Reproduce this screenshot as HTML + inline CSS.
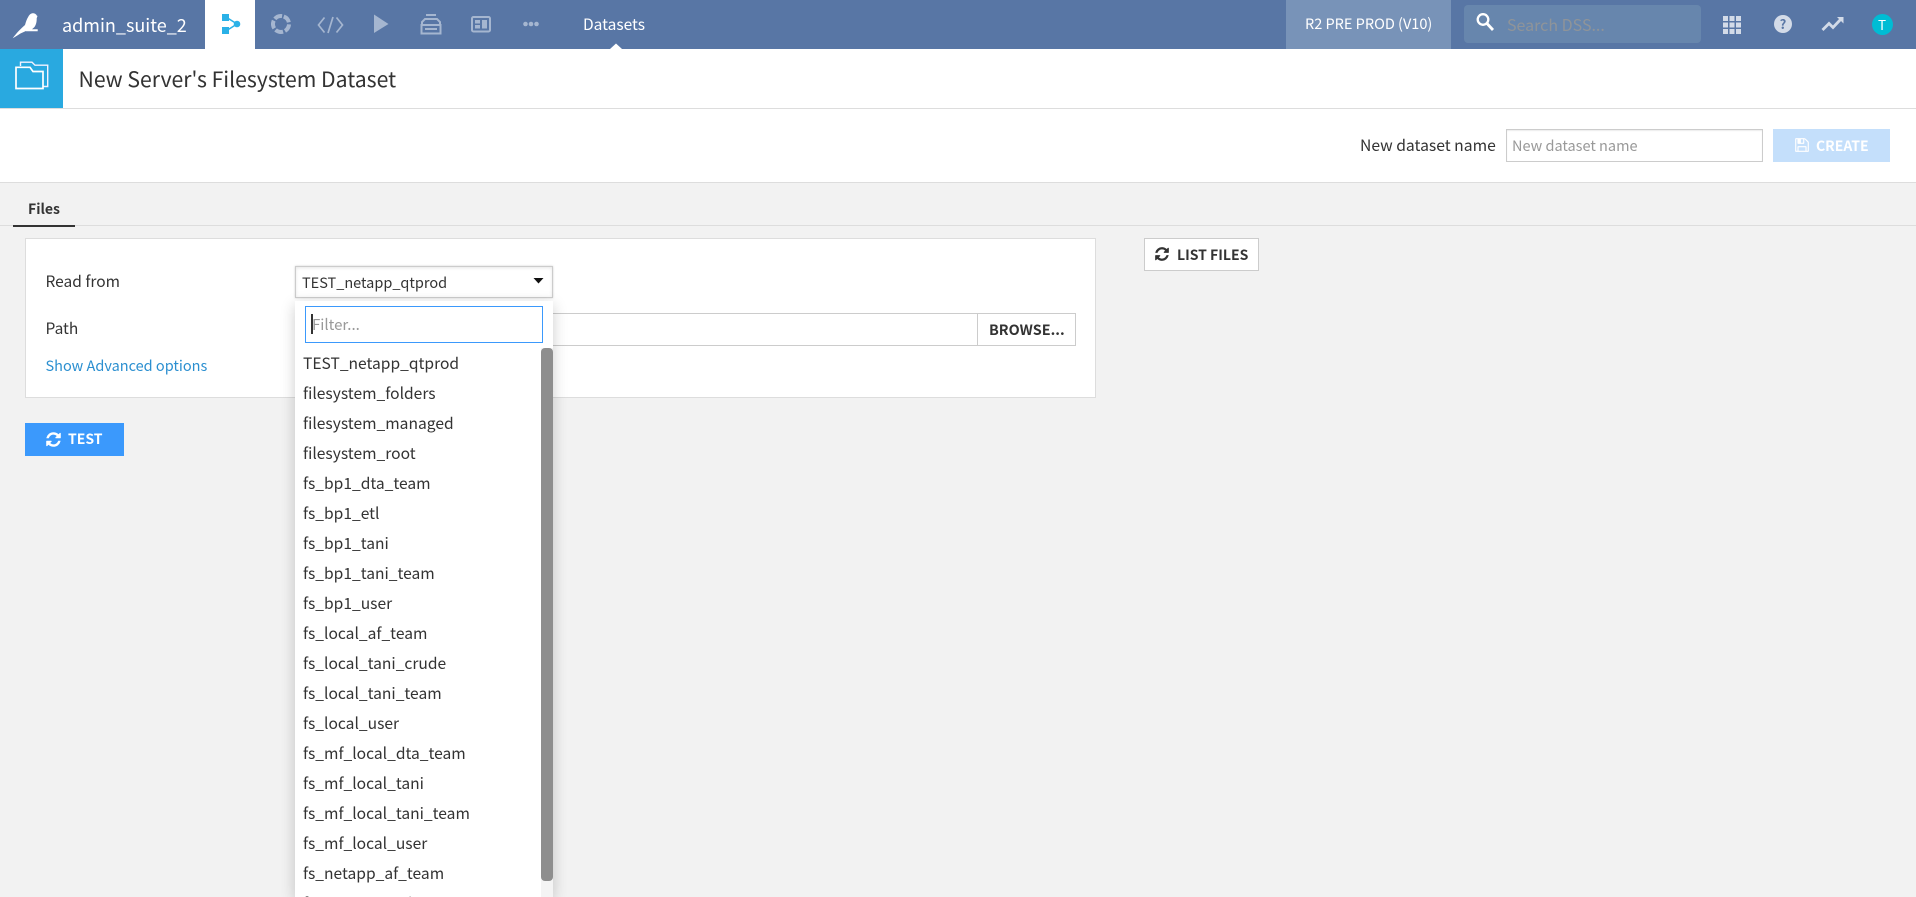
<!DOCTYPE html>
<html><head><meta charset="utf-8"><title>New Server's Filesystem Dataset</title>
<style>
html,body{margin:0;padding:0;width:1916px;height:897px;overflow:hidden;background:#f2f2f2}
body{position:relative;font-family:"Noto Sans CJK JP","Liberation Sans",sans-serif;color:#333}
.a{position:absolute;white-space:nowrap}
.t{position:absolute;white-space:nowrap;line-height:24px;height:24px}
svg{position:absolute;overflow:visible}
.it{position:absolute;left:303px;white-space:nowrap;font-size:15.6px;line-height:24px;height:24px;color:#333}
</style></head><body>
<div class="a" style="left:0;top:0;width:1916px;height:49px;background:#5876a5"></div>
<svg style="left:0;top:0" width="60" height="49"><path fill="#fff" d="M12.700 38.300C16 33.500 21 28.500 25 25C26 21.500 27 18.500 28.300 16.700C29.500 14.500 31 13.300 33 13.300C35 13.300 36.300 14.500 36.700 15.500L37.500 16L36.700 18.300C36.800 22 36 25 34.500 27L32 29.300H37.700V31.300H26V31C23.500 32 21.500 33 20 33.800C17.500 35.500 15 37 12.700 38.300Z"/></svg>
<div class="t" style="left:62px;top:13px;font-size:18px;color:#fff;">admin_suite_2</div>
<div class="a" style="left:205px;top:0;width:50px;height:49px;background:#fff"></div>
<svg style="left:205px;top:0" width="50" height="49"><g fill="#2ab1e7" stroke="none"><rect x="17" y="14" width="7" height="7"/><rect x="17" y="27" width="7" height="7"/><circle cx="32" cy="24" r="3.300"/></g><path d="M21 17L32 24L21 31" fill="none" stroke="#2ab1e7" stroke-width="1.500"/></svg>
<svg style="left:255px;top:0" width="310" height="49">
<circle cx="26" cy="24" r="8" fill="none" stroke="#a5b6d0" stroke-width="4" stroke-dasharray="8 2.050" transform="rotate(-70 26 24)"/>
<path d="M69.500 17.500L63.500 25L69.500 32.500M81.500 17.500L87.500 25L81.500 32.500M78 17L73 33" fill="none" stroke="#a5b6d0" stroke-width="1.700"/>
<path d="M119 14.500L133.500 24L119 33Z" fill="#a5b6d0"/>
<g fill="none" stroke="#a5b6d0" stroke-width="2"><path d="M171 15H181"/><path d="M167 25V22L170 19H182L185 22V25"/><path d="M166.500 33.500V25H185.500V33.500Z"/><path d="M170 29H182" /></g>
<rect x="217" y="17" width="18" height="14.500" rx="1.500" fill="none" stroke="#a5b6d0" stroke-width="2"/><path fill="#a5b6d0" d="M220 20H225V23.500H220ZM220 25H225V28.500H220ZM227 20H232V28.500H227Z"/>
<g fill="#a5b6d0"><circle cx="270.500" cy="24" r="2.300"/><circle cx="276" cy="24" r="2.300"/><circle cx="281.500" cy="24" r="2.300"/></g>
</svg>
<div class="t" style="left:583px;top:12px;font-size:15.500px;color:#fff;">Datasets</div>
<svg style="left:609px;top:43px" width="14" height="7"><path d="M1 6L7 0.500L13 6Z" fill="#fff"/></svg>
<div class="a" style="left:1286px;top:0;width:165px;height:49px;background:#7893b8"></div>
<div class="t" style="left:1305px;top:12px;font-size:14.500px;color:#fff;">R2 PRE PROD (V10)</div>
<div class="a" style="left:1464px;top:5px;width:237px;height:38px;background:#6786ad;border-radius:4px"></div>
<svg style="left:1470px;top:5px" width="30" height="34"><circle cx="13" cy="14.500" r="5.300" fill="none" stroke="#fff" stroke-width="2.300"/><path d="M17 18.500L23 25" stroke="#fff" stroke-width="2.800"/></svg>
<div class="t" style="left:1507px;top:12px;font-size:16px;color:#8f9499;">Search DSS...</div>
<svg style="left:1720px;top:14px" width="24" height="22"><g fill="#d3dbe8"><rect x="3" y="2" width="5" height="5"/><rect x="9.500" y="2" width="5" height="5"/><rect x="16" y="2" width="5" height="5"/><rect x="3" y="8.500" width="5" height="5"/><rect x="9.500" y="8.500" width="5" height="5"/><rect x="16" y="8.500" width="5" height="5"/><rect x="3" y="15" width="5" height="5"/><rect x="9.500" y="15" width="5" height="5"/><rect x="16" y="15" width="5" height="5"/></g></svg>
<div class="a" style="left:1774px;top:15px;width:18px;height:18px;border-radius:50%;background:#d3dbe8"></div>
<div class="a" style="left:1774px;top:15px;width:18px;height:18px;line-height:18px;text-align:center;font-size:13px;font-weight:700;color:#5876a5">?</div>
<svg style="left:1820px;top:14px" width="26" height="20"><path d="M2.500 16L9 9.500L13 13.500L21 5" fill="none" stroke="#d3dbe8" stroke-width="2.800"/><path d="M17 3H23.500V9.500Z" fill="#d3dbe8"/></svg>
<div class="a" style="left:1871.500px;top:14px;width:21px;height:21px;border-radius:50%;background:#00bcd4;color:#fff;font-size:13.500px;line-height:21px;text-align:center">T</div>

<div class="a" style="left:0;top:49px;width:1916px;height:59px;background:#fff"></div>
<div class="a" style="left:0;top:49px;width:63px;height:60px;background:#29a9e0"></div>
<svg style="left:0;top:49px" width="63" height="60"><path d="M20.500 17V13.200H32L35 16.200H47.700V37.500H43.500" fill="none" stroke="#f4f2ff" stroke-width="1.400"/><path d="M16 39.500V18.300H30L33 22.500H43V39.500Z" fill="none" stroke="#fff" stroke-width="1.700"/></svg>
<div class="t" style="left:78.500px;top:67px;font-size:21.200px;color:#333;">New Server's Filesystem Dataset</div>
<div class="a" style="left:0;top:108px;width:1916px;box-sizing:border-box;height:75px;background:#fff;border-top:1px solid #ddd;border-bottom:1px solid #ddd"></div>
<div class="t" style="left:1360px;top:132.500px;font-size:15.700px;color:#333;">New dataset name</div>
<div class="a" style="left:1506px;top:129px;width:257px;height:33px;box-sizing:border-box;background:#fff;border:1px solid #ccc;box-shadow:inset 0 1px 1px rgba(0,0,0,.08)"></div>
<div class="t" style="left:1512px;top:134px;font-size:14.500px;color:#999;">New dataset name</div>
<div class="a" style="left:1773px;top:129px;width:117px;height:33px;background:#c4dffb"></div>
<svg style="left:1794px;top:137px" width="16" height="16" viewBox="0 0 1792 1792"><path fill="#fff" d="M512 1536h768v-384h-768v384zm896 0h128v-896q0-14-10-38.500t-20-34.500l-281-281q-10-10-34-20t-39-10v416q0 40-28 68t-68 28h-576q-40 0-68-28t-28-68v-416h-128v1280h128v-416q0-40 28-68t68-28h832q40 0 68 28t28 68v416zm-384-928v-320q0-13-9.500-22.500t-22.500-9.500h-192q-13 0-22.500 9.500t-9.500 22.500v320q0 13 9.500 22.500t22.500 9.500h192q13 0 22.500-9.500t9.500-22.500zm640 32v928q0 40-28 68t-68 28h-1344q-40 0-68-28t-28-68v-1344q0-40 28-68t68-28h928q40 0 88 20t76 48l280 280q28 28 48 76t20 88z"/></svg>
<div class="t" style="left:1816px;top:134px;font-size:14px;font-weight:700;color:#fff;">CREATE</div>

<div class="t" style="left:28px;top:197px;font-size:14px;font-weight:700;color:#333;">Files</div>
<div class="a" style="left:0;top:225px;width:1916px;height:1px;background:#ddd"></div>
<div class="a" style="left:13px;top:225px;width:62px;height:2px;background:#333"></div>

<div class="a" style="left:25px;top:238px;width:1071px;height:160px;box-sizing:border-box;background:#fff;border:1px solid #ddd"></div>
<div class="t" style="left:45.500px;top:269px;font-size:15.500px;color:#333;">Read from</div>
<div class="t" style="left:45.500px;top:316px;font-size:15.500px;color:#333;">Path</div>
<div class="t" style="left:45.500px;top:354px;font-size:14.500px;color:#2b8fd0;">Show Advanced options</div>
<div class="a" style="left:295px;top:313px;width:683px;height:33px;box-sizing:border-box;background:#fff;border:1px solid #ccc"></div>
<div class="a" style="left:977px;top:313px;width:99px;height:33px;box-sizing:border-box;background:#fff;border:1px solid #ccc"></div>
<div class="t" style="left:989px;top:318px;font-size:14.400px;font-weight:700;color:#333;">BROWSE...</div>
<div class="a" style="left:295px;top:266px;width:258px;height:32px;box-sizing:border-box;background:#fff;border:1px solid #ccc;box-shadow:inset 0 1px 3px rgba(0,0,0,.1),0 0 2px rgba(0,0,0,.18)"></div>
<div class="t" style="left:302px;top:271px;font-size:14.500px;color:#333;">TEST_netapp_qtprod</div>
<svg style="left:533px;top:277px" width="12" height="8"><path d="M0.500 1H10.500L5.500 6.500Z" fill="#111"/></svg>

<div class="a" style="left:295px;top:301px;width:258px;height:596px;background:#fff;box-shadow:0 4px 14px rgba(0,0,0,.2)"></div>
<div class="a" style="left:305px;top:306px;width:238px;height:37px;box-sizing:border-box;background:#fff;border:1px solid #3b99fc"></div>
<div class="a" style="left:311px;top:314px;width:2px;height:20px;background:#333"></div>
<div class="t" style="left:312px;top:313px;font-size:15px;color:#999;">Filter...</div>
<div class="a" style="left:541px;top:348px;width:12px;height:549px;background:#f4f4f4"></div>
<div class="a" style="left:541px;top:348px;width:12px;height:533px;background:#8e8e8e;border-radius:4px"></div>
<div class="it" style="top:351px">TEST_netapp_qtprod</div>
<div class="it" style="top:381px">filesystem_folders</div>
<div class="it" style="top:411px">filesystem_managed</div>
<div class="it" style="top:441px">filesystem_root</div>
<div class="it" style="top:471px">fs_bp1_dta_team</div>
<div class="it" style="top:501px">fs_bp1_etl</div>
<div class="it" style="top:531px">fs_bp1_tani</div>
<div class="it" style="top:561px">fs_bp1_tani_team</div>
<div class="it" style="top:591px">fs_bp1_user</div>
<div class="it" style="top:621px">fs_local_af_team</div>
<div class="it" style="top:651px">fs_local_tani_crude</div>
<div class="it" style="top:681px">fs_local_tani_team</div>
<div class="it" style="top:711px">fs_local_user</div>
<div class="it" style="top:741px">fs_mf_local_dta_team</div>
<div class="it" style="top:771px">fs_mf_local_tani</div>
<div class="it" style="top:801px">fs_mf_local_tani_team</div>
<div class="it" style="top:831px">fs_mf_local_user</div>
<div class="it" style="top:861px">fs_netapp_af_team</div>
<div class="it" style="top:891px">fs_netapp_audit</div>

<div class="a" style="left:25px;top:423px;width:99px;height:33px;background:#3b99fc"></div>
<svg style="left:45px;top:431px" width="17" height="17" viewBox="0 0 1792 1792"><path fill="#fff" d="M1639 1056q0 5-1 7-64 268-268 434.500t-478 166.500q-146 0-282.500-55t-243.500-157l-129 129q-19 19-45 19t-45-19-19-45v-448q0-26 19-45t45-19h448q26 0 45 19t19 45-19 45l-137 137q71 66 161 102t187 36q134 0 250-65t186-179q11-17 53-117 8-23 30-23h192q13 0 22.500 9.500t9.500 22.500zm25-800v448q0 26-19 45t-45 19h-448q-26 0-45-19t-19-45 19-45l138-138q-148-137-349-137-134 0-250 65t-186 179q-11 17-53 117-8 23-30 23h-199q-13 0-22.500-9.500t-9.500-22.500v-7q65-268 270-434.500t480-166.500q146 0 284 55.500t245 156.500l130-129q19-19 45-19t45 19 19 45z"/></svg>
<div class="t" style="left:68px;top:427px;font-size:14px;font-weight:700;color:#fff;">TEST</div>

<div class="a" style="left:1144px;top:238px;width:115px;height:33px;box-sizing:border-box;background:#fff;border:1px solid #ccc"></div>
<svg style="left:1154px;top:246px" width="16" height="16" viewBox="0 0 1792 1792"><path fill="#333" d="M1639 1056q0 5-1 7-64 268-268 434.500t-478 166.500q-146 0-282.500-55t-243.500-157l-129 129q-19 19-45 19t-45-19-19-45v-448q0-26 19-45t45-19h448q26 0 45 19t19 45-19 45l-137 137q71 66 161 102t187 36q134 0 250-65t186-179q11-17 53-117 8-23 30-23h192q13 0 22.500 9.500t9.500 22.500zm25-800v448q0 26-19 45t-45 19h-448q-26 0-45-19t-19-45 19-45l138-138q-148-137-349-137-134 0-250 65t-186 179q-11 17-53 117-8 23-30 23h-199q-13 0-22.500-9.500t-9.500-22.500v-7q65-268 270-434.500t480-166.500q146 0 284 55.500t245 156.500l130-129q19-19 45-19t45 19 19 45z"/></svg>
<div class="t" style="left:1177px;top:243px;font-size:14px;font-weight:700;color:#333;">LIST FILES</div>
</body></html>
